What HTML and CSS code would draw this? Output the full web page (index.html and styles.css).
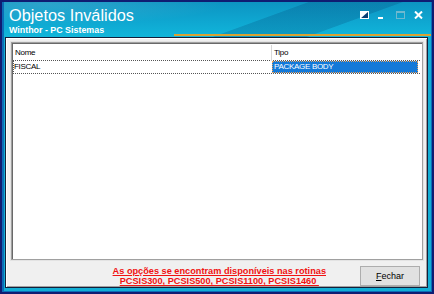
FILE: index.html
```html
<!DOCTYPE html>
<html lang="pt-BR">
<head>
<meta charset="UTF-8" />
<title>Objetos Inválidos</title>
<link rel="stylesheet" href="styles.css">
</head>
<body>
<div class="window">
  <div class="frame">
    <header class="titlebar">
      <div class="titles">
        <div class="title">Objetos Inválidos</div>
        <div class="subtitle">Winthor - PC Sistemas</div>
      </div>
      <div class="controls">
        <svg width="9" height="8" viewBox="0 0 9 8"><rect x="0.5" y="0.5" width="8" height="7" fill="#0b3f73" stroke="#fff"/><polygon points="0,0 9,0 0,8" fill="#fff"/></svg>
        <svg width="9" height="8" viewBox="0 0 9 8"><rect x="0" y="6" width="5" height="2" fill="#fff"/></svg>
        <svg width="9" height="8" viewBox="0 0 9 8"><rect x="0.5" y="0.5" width="8" height="7" fill="none" stroke="#6fb9cf"/><rect x="0" y="0" width="9" height="2" fill="#6fb9cf"/></svg>
        <svg width="9" height="8" viewBox="0 0 9 8"><path d="M1 0.5 L8 7.5 M8 0.5 L1 7.5" stroke="#fff" stroke-width="2"/></svg>
      </div>
    </header>

    <main class="client">
      <div class="list">
        <div class="row head">
          <div class="cell">Nome</div>
          <div class="cell sep">Tipo</div>
        </div>
        <div class="row focused">
          <div class="cell">FISCAL</div>
          <div class="cell selected">PACKAGE BODY</div>
        </div>
      </div>
      <div class="footer">
        <p class="notice">As opções se encontram disponíveis nas rotinas<br>PCSIS300, PCSIS500, PCSIS1100, PCSIS1460&nbsp;</p>
        <button class="btn"><u>F</u>echar</button>
      </div>
    </main>
  </div>
</div>
</body>
</html>
```

FILE: styles.css
```css
html, body {
  margin: 0; padding: 0;
  width: 434px; height: 294px;
  overflow: hidden;
  background: #0f1c72;
  font-family: "Liberation Sans", Arial, sans-serif;
}
.window {
  box-sizing: border-box;
  height: 294px;
  padding: 2px;
  background: #0f1c72;
}
.frame {
  box-sizing: border-box;
  height: 100%;
  display: flex;
  flex-direction: column;
  background: #12aed4;
  border-left: 2px solid #0b6cb6;
  border-right: 1px solid #0b6cb6;
  border-bottom: 1px solid #0b6cb6;
  padding: 0 3px 3px 1px;
}
.titlebar {
  position: relative;
  height: 35px;
  margin: 0 -3px 0 -1px;
  padding: 0 0 0 5px;
  display: flex;
  align-items: flex-start;
  color: #fff;
  background:
    radial-gradient(ellipse 260px 30px at 40px 2px, rgba(255,255,255,.13), transparent 70%),
    linear-gradient(160deg, transparent 0 58%, rgba(0,50,100,.2) 58.5% 76%, transparent 76.5%),
    linear-gradient(#0d94c2, #0faad3 65%, #11b6da);
}
.titlebar::after {
  content: "";
  position: absolute;
  left: 170px; right: 0; bottom: 1px;
  height: 2px;
  background: #d9a233;
}
.titles {
  flex: 1;
}
.title {
  font-size: 16.3px;
  line-height: 18px;
  margin-top: 4px;
}
.subtitle {
  font-size: 8.9px;
  font-weight: bold;
  line-height: 11px;
  margin-top: 1px;
}
.controls {
  display: flex;
  gap: 9px;
  margin: 9px 8px 0 0;
}
.controls svg { display: block; }

.client {
  flex: 1;
  display: flex;
  flex-direction: column;
  background: #f0f0f0;
  border: 1px solid #12203c;
  box-shadow: inset 1px 1px 0 #fff, inset -1px -1px 0 #a0a0a0;
  padding: 4px 4px 0 5px;
}
.list {
  flex: 1;
  background: #fff;
  border: 1px solid #a0a0a0;
  box-shadow: inset 1px 1px 0 #696969, 0 0 0 1px #e3e3e3;
  padding: 2px 2px 0 1px;
  font-size: 8px;
  letter-spacing: -0.3px;
  color: #000;
}
.row {
  display: grid;
  grid-template-columns: 258px 1fr;
}
.row.head {
  height: 15px;
  align-items: center;
  border-bottom: 1px dotted #555;
}
.row.focused {
  height: 12px;
  border-bottom: 1px dotted #555;
  border-left: 1px dotted #555;
}
.cell {
  padding-left: 2px;
  line-height: 12px;
  white-space: nowrap;
}
.row.focused .cell:first-child { padding-left: 0; }
.cell.sep {
  border-left: 1px solid #d8d8d8;
  height: 100%;
  line-height: 16px;
}
.cell.selected {
  background: #1479d8;
  color: #fff;
  outline: 1px dotted #e0a060;
  outline-offset: -1px;
  margin-right: 2px;
}
.footer {
  height: 27px;
  display: flex;
  justify-content: flex-end;
  align-items: flex-start;
  gap: 34px;
}
.notice {
  margin: 6px 0 0;
  font-size: 9.2px;
  line-height: 10px;
  font-weight: bold;
  color: #f01212;
  text-decoration: underline;
  text-align: center;
}
.btn {
  margin: 6px 3px 0 0;
  width: 60px;
  height: 20px;
  padding: 0;
  background: #e1e1e1;
  border: 1px solid #adadad;
  font-family: "Liberation Sans", Arial, sans-serif;
  font-size: 9px;
  color: #000;
}
```
